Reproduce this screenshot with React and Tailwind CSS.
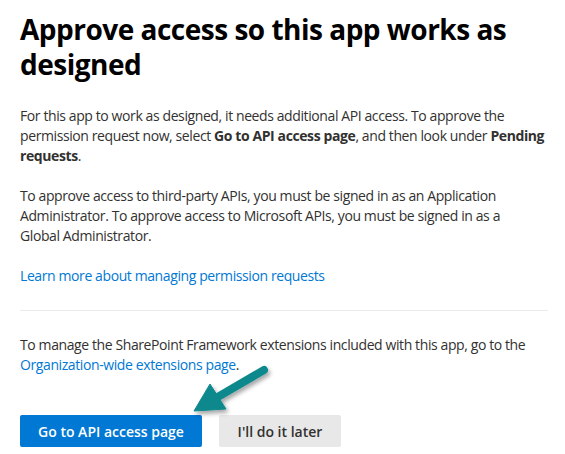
import React from "react";

export default function App() {
  return (
    <main
      className="relative w-[565px] h-[454px] overflow-hidden bg-white text-[#323130]"
      style={{ fontFamily: '"Open Sans", "Noto Sans", sans-serif' }}
    >
      <div className="pl-5 pr-[10px] pt-[12px]">
        {/* Title */}
        <h1 className="text-[28px] leading-[35px] font-bold text-black tracking-[-0.5px]">
          Approve access so this app works as designed
        </h1>

        <div className="mt-[24px] text-[14px] leading-[20px] tracking-[-0.4px]">
          <p>
            For this app to work as designed, it needs additional API access. To approve the
            <br />
            permission request now, select <b>Go to API access page</b>, and then look under{" "}
            <b>Pending</b>
            <br />
            <b>requests</b>.
          </p>
          <p className="mt-5">
            To approve access to third-party APIs, you must be signed in as an Application
            <br />
            Administrator. To approve access to Microsoft APIs, you must be signed in as a
            <br />
            Global Administrator.
          </p>
          <p className="mt-5">
            <a href="#" className="text-[#0078d4]">
              Learn more about managing permission requests
            </a>
          </p>

          <hr className="mt-[24px] mr-[7px] border-t border-[#edebe9]" />

          <p className="mt-[24px]">
            To manage the SharePoint Framework extensions included with this app, go to the
            <br />
            <a href="#" className="text-[#0078d4]">
              Organization-wide extensions page
            </a>
            .
          </p>
        </div>

        {/* Buttons */}
        <div className="mt-[40px] flex gap-[17px]">
          <button className="h-8 w-[182px] rounded-[2px] bg-[#0078d4] text-white text-[14px] font-semibold">
            Go to API access page
          </button>
          <button className="h-8 w-[122px] rounded-[2px] bg-[#e8e8e8] text-[#323130] text-[14px] font-semibold">
            I'll do it later
          </button>
        </div>
      </div>

      {/* Callout arrow */}
      <svg
        className="absolute left-0 top-0 pointer-events-none"
        width="565"
        height="454"
        viewBox="0 0 565 454"
      >
        <defs>
          <filter id="shadow" x="-20%" y="-20%" width="140%" height="140%">
            <feDropShadow dx="2" dy="3" stdDeviation="2" floodColor="#000" floodOpacity="0.35" />
          </filter>
        </defs>
        <g filter="url(#shadow)" fill="#11898d" stroke="#11898d">
          <line x1="264" y1="370" x2="216" y2="398" strokeWidth="8" strokeLinecap="round" />
          <polygon points="194,411 210,384 226,409" strokeWidth="1" strokeLinejoin="round" />
        </g>
      </svg>
    </main>
  );
}
